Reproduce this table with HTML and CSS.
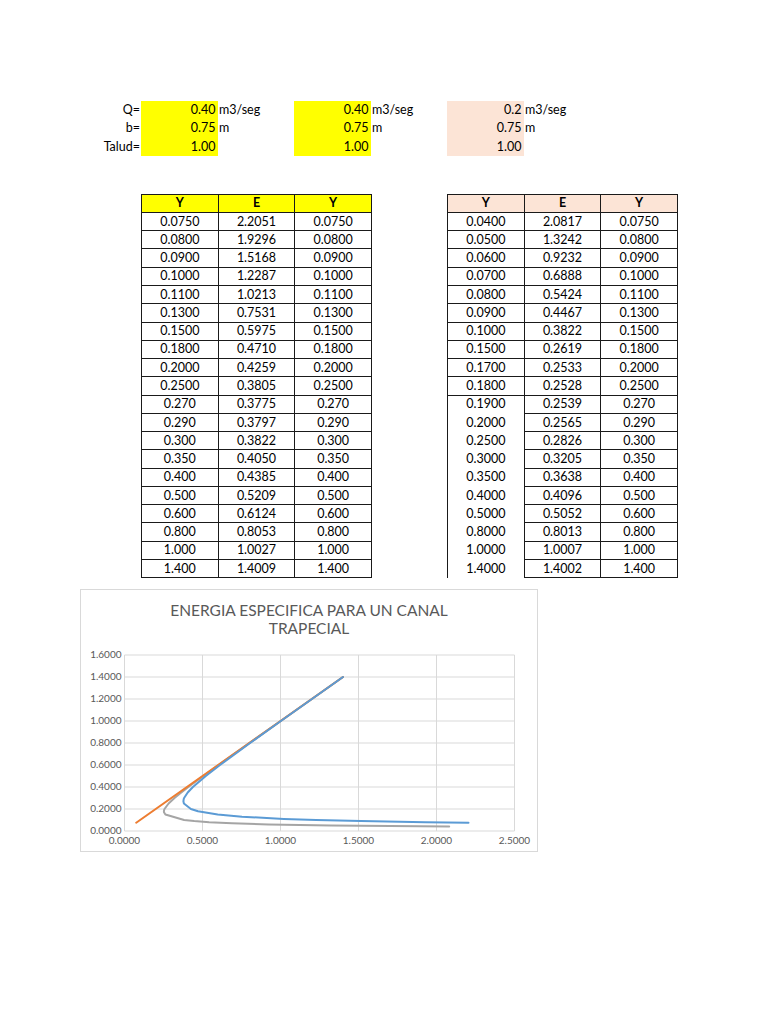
FILE: index.html
```html
<!DOCTYPE html>
<html lang="es">
<head>
<meta charset="utf-8">
<title>Energía específica – canal trapecial</title>
<link rel="stylesheet" href="styles.css">
</head>
<body>
<div class="sheet">
  <div class="params">
    <div class="lbl">Q=</div><div class="val yellow">0.40</div><div class="unit">m3/seg</div><div class="val yellow">0.40</div><div class="unit">m3/seg</div><div class="val peach">0.2</div><div class="unit">m3/seg</div><div></div>
    <div class="lbl">b=</div><div class="val yellow">0.75</div><div class="unit">m</div><div class="val yellow">0.75</div><div class="unit">m</div><div class="val peach">0.75</div><div class="unit">m</div><div></div>
    <div class="lbl">Talud=</div><div class="val yellow">1.00</div><div class="unit"></div><div class="val yellow">1.00</div><div class="unit"></div><div class="val peach">1.00</div><div class="unit"></div><div></div>
  </div>

  <div class="tables">
    <table class="grid">
      <thead><tr class="head yellow"><th>Y</th><th>E</th><th>Y</th></tr></thead>
      <tbody>
        <tr><td>0.0750</td><td>2.2051</td><td>0.0750</td></tr>
        <tr><td>0.0800</td><td>1.9296</td><td>0.0800</td></tr>
        <tr><td>0.0900</td><td>1.5168</td><td>0.0900</td></tr>
        <tr><td>0.1000</td><td>1.2287</td><td>0.1000</td></tr>
        <tr><td>0.1100</td><td>1.0213</td><td>0.1100</td></tr>
        <tr><td>0.1300</td><td>0.7531</td><td>0.1300</td></tr>
        <tr><td>0.1500</td><td>0.5975</td><td>0.1500</td></tr>
        <tr><td>0.1800</td><td>0.4710</td><td>0.1800</td></tr>
        <tr><td>0.2000</td><td>0.4259</td><td>0.2000</td></tr>
        <tr><td>0.2500</td><td>0.3805</td><td>0.2500</td></tr>
        <tr><td>0.270</td><td>0.3775</td><td>0.270</td></tr>
        <tr><td>0.290</td><td>0.3797</td><td>0.290</td></tr>
        <tr><td>0.300</td><td>0.3822</td><td>0.300</td></tr>
        <tr><td>0.350</td><td>0.4050</td><td>0.350</td></tr>
        <tr><td>0.400</td><td>0.4385</td><td>0.400</td></tr>
        <tr><td>0.500</td><td>0.5209</td><td>0.500</td></tr>
        <tr><td>0.600</td><td>0.6124</td><td>0.600</td></tr>
        <tr><td>0.800</td><td>0.8053</td><td>0.800</td></tr>
        <tr><td>1.000</td><td>1.0027</td><td>1.000</td></tr>
        <tr><td>1.400</td><td>1.4009</td><td>1.400</td></tr>
      </tbody>
    </table>

    <table class="grid">
      <thead><tr class="head peach"><th>Y</th><th>E</th><th>Y</th></tr></thead>
      <tbody>
        <tr><td>0.0400</td><td>2.0817</td><td>0.0750</td></tr>
        <tr><td>0.0500</td><td>1.3242</td><td>0.0800</td></tr>
        <tr><td>0.0600</td><td>0.9232</td><td>0.0900</td></tr>
        <tr><td>0.0700</td><td>0.6888</td><td>0.1000</td></tr>
        <tr><td>0.0800</td><td>0.5424</td><td>0.1100</td></tr>
        <tr><td>0.0900</td><td>0.4467</td><td>0.1300</td></tr>
        <tr><td>0.1000</td><td>0.3822</td><td>0.1500</td></tr>
        <tr><td>0.1500</td><td>0.2619</td><td>0.1800</td></tr>
        <tr><td>0.1700</td><td>0.2533</td><td>0.2000</td></tr>
        <tr><td>0.1800</td><td>0.2528</td><td>0.2500</td></tr>
        <tr><td class="open">0.1900</td><td>0.2539</td><td>0.270</td></tr>
        <tr><td class="open">0.2000</td><td>0.2565</td><td>0.290</td></tr>
        <tr><td class="open">0.2500</td><td>0.2826</td><td>0.300</td></tr>
        <tr><td class="open">0.3000</td><td>0.3205</td><td>0.350</td></tr>
        <tr><td class="open">0.3500</td><td>0.3638</td><td>0.400</td></tr>
        <tr><td class="open">0.4000</td><td>0.4096</td><td>0.500</td></tr>
        <tr><td class="open">0.5000</td><td>0.5052</td><td>0.600</td></tr>
        <tr><td class="open">0.8000</td><td>0.8013</td><td>0.800</td></tr>
        <tr><td class="open">1.0000</td><td>1.0007</td><td>1.000</td></tr>
        <tr><td class="open">1.4000</td><td>1.4002</td><td>1.400</td></tr>
      </tbody>
    </table>
  </div>

  <div class="chart">
    <div class="chart-title">ENERGIA ESPECIFICA PARA UN CANAL<br>TRAPECIAL</div>
    <svg class="plot" width="456" height="214" viewBox="81 636 456 214" xmlns="http://www.w3.org/2000/svg">
      <g class="gridlines">
        <line x1="124.5" y1="654" x2="514.5" y2="654"/>
        <line x1="124.5" y1="676" x2="514.5" y2="676"/>
        <line x1="124.5" y1="698" x2="514.5" y2="698"/>
        <line x1="124.5" y1="720" x2="514.5" y2="720"/>
        <line x1="124.5" y1="742" x2="514.5" y2="742"/>
        <line x1="124.5" y1="764" x2="514.5" y2="764"/>
        <line x1="124.5" y1="786" x2="514.5" y2="786"/>
        <line x1="124.5" y1="808" x2="514.5" y2="808"/>
        <line x1="124.5" y1="830" x2="514.5" y2="830"/>
        <line x1="124.5" y1="654" x2="124.5" y2="830"/>
        <line x1="202.5" y1="654" x2="202.5" y2="830"/>
        <line x1="280.5" y1="654" x2="280.5" y2="830"/>
        <line x1="358.5" y1="654" x2="358.5" y2="830"/>
        <line x1="436.5" y1="654" x2="436.5" y2="830"/>
        <line x1="514.5" y1="654" x2="514.5" y2="830"/>
      </g>
      <g class="ylabels">
        <text x="121.5" y="657">1.6000</text>
        <text x="121.5" y="679">1.4000</text>
        <text x="121.5" y="701">1.2000</text>
        <text x="121.5" y="723">1.0000</text>
        <text x="121.5" y="745">0.8000</text>
        <text x="121.5" y="767">0.6000</text>
        <text x="121.5" y="789">0.4000</text>
        <text x="121.5" y="811">0.2000</text>
        <text x="121.5" y="833">0.0000</text>
      </g>
      <g class="xlabels">
        <text x="124.5" y="843">0.0000</text>
        <text x="202.5" y="843">0.5000</text>
        <text x="280.5" y="843">1.0000</text>
        <text x="358.5" y="843">1.5000</text>
        <text x="436.5" y="843">2.0000</text>
        <text x="514.5" y="843">2.5000</text>
      </g>
      <polyline class="s-gray" points="449.2,825.6 331.1,824.5 268.5,823.4 232.0,822.3 209.1,821.2 194.2,820.1 184.1,819 165.4,813.5 164.0,811.3 163.9,810.2 164.1,809.1 164.5,808 168.6,802.5 174.5,797 181.3,791.5 188.4,786 203.3,775 249.5,742 280.6,720 342.9,676"/>
      <polyline class="s-orange" points="136.2,821.75 343.0,676"/>
      <polyline class="s-blue" points="468.5,821.75 425.5,821.2 361.1,820.1 316.2,819 283.8,817.9 242.0,815.7 217.7,813.5 198.0,810.2 190.9,808 183.9,802.5 183.4,800.3 183.7,798.1 184.1,797 187.7,791.5 192.9,786 205.8,775 220.0,764 250.1,742 280.9,720 343.0,676"/>
    </svg>
  </div>
</div>
</body>
</html>
```

FILE: styles.css
```css
* { box-sizing: border-box; }

body {
  margin: 0;
  background: #ffffff;
  color: #000000;
  font-family: Lato, "Carlito", "Liberation Sans", sans-serif;
  font-size: 12.5px;
}

.sheet {
  padding-top: 101px;
}

/* parameter block */
.params {
  display: grid;
  grid-template-columns: 141px repeat(7, 76.5px);
  grid-auto-rows: 18.3px;
}

.params > div {
  line-height: 18.3px;
  white-space: nowrap;
}

.lbl {
  text-align: right;
  padding-right: 1px;
}

.val {
  text-align: right;
  padding-right: 2px;
}

.unit {
  padding-left: 1.5px;
}

.yellow { background: #ffff00; }
.peach { background: #fce4d6; }

/* data tables */
.tables {
  display: flex;
  gap: 75px;
  margin: 37.8px 0 0 141px;
  align-items: flex-start;
}

.grid {
  border-collapse: collapse;
  table-layout: fixed;
  width: 231px;
}

.grid tr {
  height: 18.28px;
}

.grid th,
.grid td {
  border: 1px solid #1a1a1a;
  padding: 0 0 1px;
  text-align: center;
  line-height: 15px;
  font-size: 12.5px;
}

.grid th {
  font-weight: 700;
}

.grid td.open {
  border-top: none;
  border-bottom: none;
}

/* chart */
.chart {
  margin: 11px 0 0 80px;
  width: 458px;
  height: 263px;
  border: 1px solid #d9d9d9;
  background: #ffffff;
}

.chart-title {
  padding-top: 12px;
  text-align: center;
  font-size: 15.5px;
  line-height: 17.5px;
  color: #595959;
}

.plot {
  display: block;
}

.gridlines line {
  stroke: #d9d9d9;
  stroke-width: 1;
}

.ylabels text,
.xlabels text {
  font-family: Lato, "Carlito", "Liberation Sans", sans-serif;
  font-size: 10px;
  fill: #595959;
}

.ylabels text { text-anchor: end; }
.xlabels text { text-anchor: middle; }

.s-gray,
.s-orange,
.s-blue {
  fill: none;
  stroke-width: 2;
  stroke-linejoin: round;
  stroke-linecap: round;
}

.s-gray { stroke: #a5a5a5; }
.s-orange { stroke: #ed7d31; }
.s-blue { stroke: #5b9bd5; }
```
